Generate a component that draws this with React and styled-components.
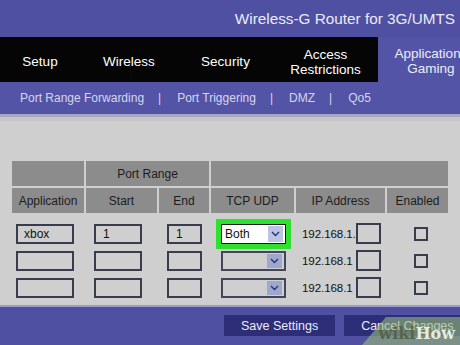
import React from "react";
import styled, { createGlobalStyle } from "styled-components";

const GlobalStyle = createGlobalStyle`
  body {
    margin: 0;
    background: #5050a2;
    font-family: "Liberation Sans", Arial, sans-serif;
  }
`;

const COLS = "72px 71px 50px 83px 89px 61px";

const tabs = [
  { label: ["Setup"], width: 80 },
  { label: ["Wireless"], width: 98 },
  { label: ["Security"], width: 95 },
  { label: ["Access", "Restrictions"], width: 105 },
  { label: ["Applications", "Gaming"], width: 106, active: true },
];

const links = ["Port Range Forwarding", "Port Triggering", "DMZ", "Qo5"];

const rows = [
  { app: "xbox", start: "1", end: "1", proto: "Both", ip: "192.168.1.", highlight: true },
  { app: "", start: "", end: "", proto: "", ip: "192.168.1" },
  { app: "", start: "", end: "", proto: "", ip: "192.168.1" },
];

function Chevron() {
  return (
    <svg width="9" height="6" viewBox="0 0 9 6">
      <path d="M1 1 L4.5 4.5 L8 1" fill="none" stroke="#2a3370" strokeWidth="1.4" />
    </svg>
  );
}

export default function App() {
  return (
    <Page>
      <GlobalStyle />
      <TitleBar>Wireless-G Router for 3G/UMTS</TitleBar>
      <NavBar>
        {tabs.map((t) => (
          <NavTab key={t.label[0]} $width={t.width} $active={t.active}>
            {t.label.map((l) => (
              <span key={l}>{l}</span>
            ))}
          </NavTab>
        ))}
      </NavBar>
      <SubNav>
        {links.map((l, i) => (
          <React.Fragment key={l}>
            {i > 0 && <Sep>|</Sep>}
            <SubLink>{l}</SubLink>
          </React.Fragment>
        ))}
      </SubNav>
      <Content>
        <HeadGrid>
          <HeadCell />
          <HeadCell $span={2}>Port Range</HeadCell>
          <HeadCell $span={3} />
          <HeadCell>Application</HeadCell>
          <HeadCell>Start</HeadCell>
          <HeadCell>End</HeadCell>
          <HeadCell>TCP UDP</HeadCell>
          <HeadCell>IP Address</HeadCell>
          <HeadCell>Enabled</HeadCell>
        </HeadGrid>
        <Rows>
          {rows.map((r, i) => (
            <DataRow key={i}>
              <Field $left={4} $width={58}>{r.app}</Field>
              <Field $left={8} $width={48}>{r.start}</Field>
              <Field $left={8} $width={35}>{r.end}</Field>
              <SelectBox $highlight={r.highlight}>
                <span>{r.proto}</span>
                <ArrowBtn $light={r.highlight}>
                  <Chevron />
                </ArrowBtn>
              </SelectBox>
              <IpCell>
                <IpText>{r.ip}</IpText>
                <IpBox />
              </IpCell>
              <Check />
            </DataRow>
          ))}
        </Rows>
      </Content>
      <Footer>
        <Button>Save Settings</Button>
        <Button>Cancel Changes</Button>
      </Footer>
      <Watermark>
        <WikiText>wiki</WikiText>
        <HowText>How</HowText>
      </Watermark>
    </Page>
  );
}

const Page = styled.div`
  position: relative;
  width: 460px;
  height: 345px;
  overflow: hidden;
  display: flex;
  flex-direction: column;
  background: #cfcfcf;
`;

const TitleBar = styled.div`
  height: 37px;
  flex-shrink: 0;
  background: #5050a2;
  color: #ebebf6;
  font-size: 15.3px;
  display: flex;
  align-items: center;
  justify-content: flex-end;
  padding-right: 5px;
  padding-top: 1px;
  box-sizing: border-box;
`;

const NavBar = styled.div`
  height: 45px;
  flex-shrink: 0;
  display: flex;
  background: #050505;
`;

const NavTab = styled.div`
  width: ${(p) => p.$width}px;
  flex-shrink: 0;
  background: ${(p) => (p.$active ? "#5454a6" : "#050505")};
  color: ${(p) => (p.$active ? "#ececf8" : "#ffffff")};
  font-size: 13.5px;
  line-height: 15px;
  display: flex;
  flex-direction: column;
  align-items: center;
  justify-content: center;
  text-align: center;
  white-space: nowrap;
  padding-top: ${(p) => (p.$active ? "2px" : "4px")};
  padding-left: ${(p) => (p.$active ? "0" : "0")};
  box-sizing: border-box;
`;

const SubNav = styled.div`
  height: 31px;
  flex-shrink: 0;
  background: #5454a6;
  border-bottom: 3px solid #a6a6c2;
  display: flex;
  align-items: center;
  padding-left: 20px;
  padding-bottom: 1px;
  color: #d6d6f0;
  font-size: 12px;
`;

const SubLink = styled.span``;

const Sep = styled.span`
  margin: 0 16px 0 14px;
`;

const Content = styled.div`
  flex: 1;
  background: #cfcfcf;
  border-top: 4px solid #c6c6c6;
  padding: 40px 0 0 12px;
`;

const HeadGrid = styled.div`
  display: grid;
  grid-template-columns: ${COLS};
  grid-auto-rows: 25px;
  gap: 2px;
`;

const HeadCell = styled.div`
  grid-column: span ${(p) => p.$span || 1};
  background: #8c8c8c;
  color: #1c1c1c;
  font-size: 12px;
  display: flex;
  align-items: center;
  justify-content: center;
`;

const Rows = styled.div`
  margin-top: 10px;
  display: flex;
  flex-direction: column;
  gap: 7px;
`;

const DataRow = styled.div`
  display: grid;
  grid-template-columns: ${COLS};
  column-gap: 2px;
  height: 20px;
  align-items: center;
`;

const Field = styled.div`
  margin-left: ${(p) => p.$left}px;
  width: ${(p) => p.$width}px;
  height: 20px;
  box-sizing: border-box;
  border: 2px solid #383c4c;
  font-size: 12px;
  color: #111;
  display: flex;
  align-items: center;
  padding-left: ${(p) => (p.$width > 50 ? 6 : 7)}px;
`;

const SelectBox = styled.div`
  margin-left: 10px;
  width: 65px;
  height: 20px;
  box-sizing: border-box;
  border: ${(p) => (p.$highlight ? "1px solid #1b1b1b" : "2px solid #42465a")};
  background: ${(p) => (p.$highlight ? "#ffffff" : "transparent")};
  outline: ${(p) => (p.$highlight ? "5px solid #2fe12f" : "none")};
  font-size: 12px;
  color: #111;
  display: flex;
  align-items: center;
  justify-content: space-between;
  padding: 1px 2px 1px 3px;
`;

const ArrowBtn = styled.div`
  width: 15px;
  height: 100%;
  background: ${(p) => (p.$light ? "#bcc4e4" : "#9ea8cc")};
  display: flex;
  align-items: center;
  justify-content: center;
`;

const IpCell = styled.div`
  display: flex;
  align-items: center;
  padding-left: 6px;
`;

const IpText = styled.span`
  font-size: 11.6px;
  letter-spacing: -0.1px;
  color: #111;
  width: 54px;
  white-space: nowrap;
`;

const IpBox = styled.div`
  width: 25px;
  height: 21px;
  box-sizing: border-box;
  border: 2px solid #383c4c;
`;

const Check = styled.div`
  margin-left: 27px;
  width: 14px;
  height: 14px;
  box-sizing: border-box;
  border: 2px solid #383c4c;
`;

const Footer = styled.div`
  height: 40px;
  flex-shrink: 0;
  box-sizing: border-box;
  background: #5050a2;
  border-top: 2px solid #9c9cc6;
  display: flex;
  gap: 9px;
  padding: 8px 0 0 224px;
`;

const Button = styled.div`
  flex-shrink: 0;
  height: 21px;
  padding: 0 17px;
  background: #2d2d78;
  color: #ececf8;
  font-size: 12.5px;
  display: flex;
  align-items: center;
`;

const Watermark = styled.div`
  position: absolute;
  right: 0;
  bottom: 0;
  width: 98px;
  height: 28px;
  background: rgba(150, 186, 120, 0.6);
  clip-path: polygon(24px 0, 100% 0, 100% 100%, 0 100%);
  display: flex;
  align-items: flex-end;
  justify-content: flex-end;
  padding: 0 5px 2px 0;
  box-sizing: border-box;
  font-family: "DejaVu Serif", "Liberation Serif", serif;
  font-weight: bold;
  font-size: 16px;
  line-height: 18px;
`;

const WikiText = styled.span`
  color: #58644c;
`;

const HowText = styled.span`
  color: #e6ecdc;
`;
